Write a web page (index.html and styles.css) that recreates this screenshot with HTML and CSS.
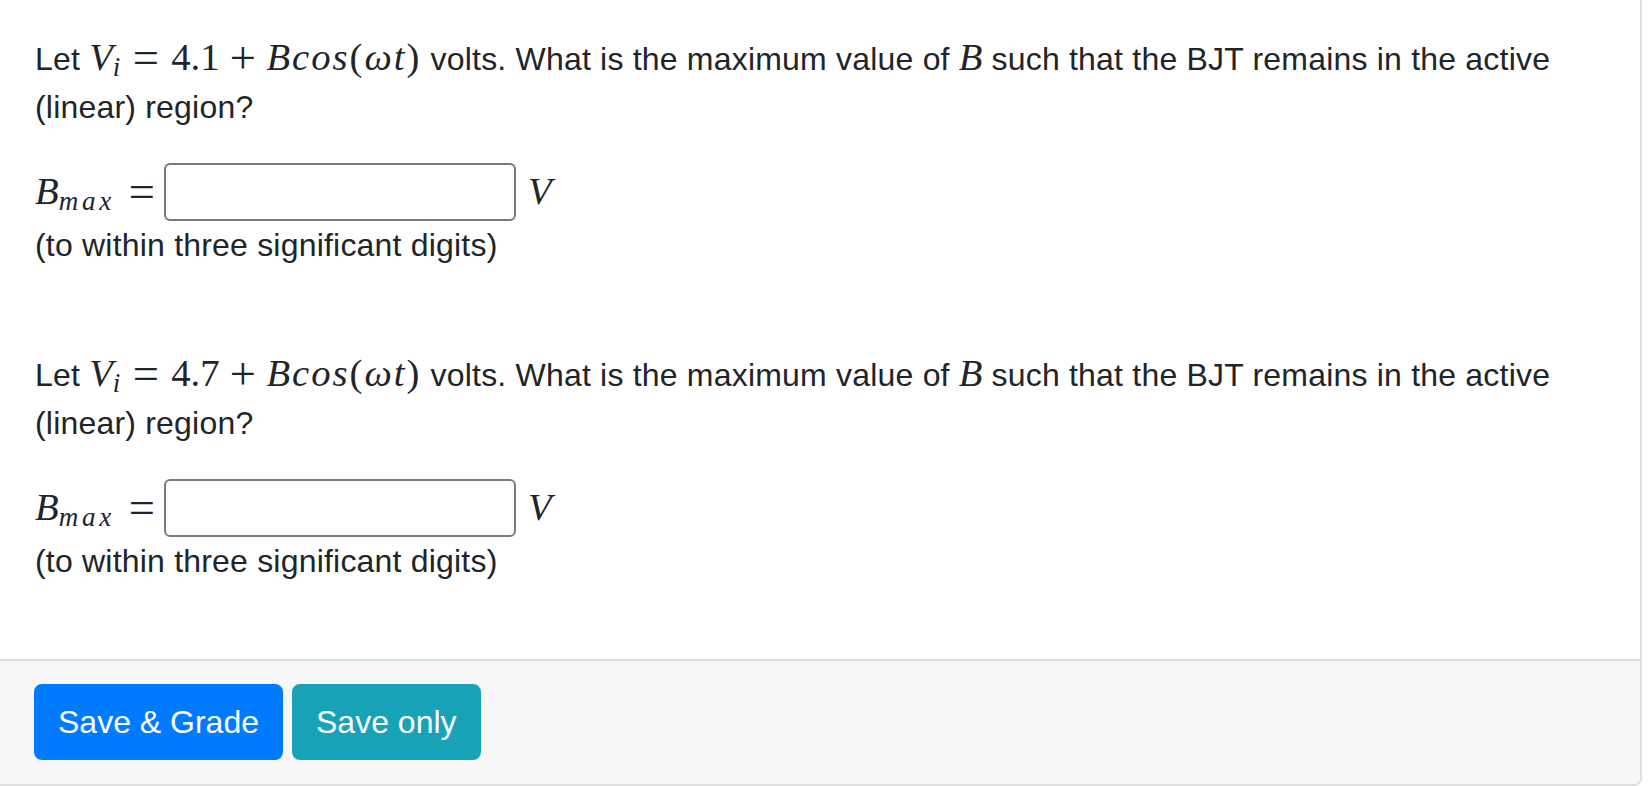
FILE: index.html
```html
<!DOCTYPE html>
<html lang="en">
<head>
<meta charset="utf-8">
<title>BJT active region</title>
<link rel="stylesheet" href="styles.css">
</head>
<body>
<div class="page">
  <div class="card">
    <div class="card-body">
      <div class="question">
        <p class="prompt">Let <span class="m"><i>V</i><sub class="sb"><i>i</i></sub><span class="rel">=</span>4.1<span class="bin">+</span><span class="fn"><i>B</i><i>c</i><i>o</i><i>s</i>(<i>ω</i><i>t</i>)</span></span> volts. What is the maximum value of <span class="m"><i>B</i></span> such that the BJT remains in the active (linear) region?</p>
        <div class="answer-row">
          <span class="m"><i>B</i><sub class="sb sb-wide"><i>max</i></sub><span class="rel">=</span></span>
          <input class="answer" type="text" aria-label="B max">
          <span class="m unit"><i>V</i></span>
        </div>
        <p class="note">(to within three significant digits)</p>
      </div>
      <div class="question">
        <p class="prompt">Let <span class="m"><i>V</i><sub class="sb"><i>i</i></sub><span class="rel">=</span>4.7<span class="bin">+</span><span class="fn"><i>B</i><i>c</i><i>o</i><i>s</i>(<i>ω</i><i>t</i>)</span></span> volts. What is the maximum value of <span class="m"><i>B</i></span> such that the BJT remains in the active (linear) region?</p>
        <div class="answer-row">
          <span class="m"><i>B</i><sub class="sb sb-wide"><i>max</i></sub><span class="rel">=</span></span>
          <input class="answer" type="text" aria-label="B max">
          <span class="m unit"><i>V</i></span>
        </div>
        <p class="note">(to within three significant digits)</p>
      </div>
    </div>
    <div class="card-footer">
      <button class="btn btn-primary" type="button">Save &amp; Grade</button>
      <button class="btn btn-info" type="button">Save only</button>
    </div>
  </div>
</div>
</body>
</html>
```

FILE: styles.css
```css
html, body {
  margin: 0;
  padding: 0;
  background: #ffffff;
  overflow: hidden;
}

body {
  font-family: "Liberation Sans", Arial, sans-serif;
  font-size: 32px;
  line-height: 48px;
  color: #212529;
  letter-spacing: 0.2px;
}

.page {
  padding-right: 8px;
}

.card {
  border-right: 2px solid #dfdfdf;
  border-bottom: 2px solid #dfdfdf;
  border-bottom-right-radius: 8px;
  background: #ffffff;
  overflow: hidden;
}

.card-body {
  padding: 35px 40px 74px 35px;
}

.question + .question {
  margin-top: 82px;
}

.prompt {
  margin: 0 0 32px 0;
}

.note {
  margin: 0;
}

.m {
  font-family: "Liberation Serif", "Times New Roman", serif;
  font-size: 38.7px;
  line-height: 1;
  letter-spacing: 0;
}

.m i {
  font-style: italic;
}

.fn {
  letter-spacing: 2px;
}

.sb {
  font-size: 0.7em;
  vertical-align: -6px;
  line-height: 0;
}

.sb-wide {
  letter-spacing: 0.14em;
}

.rel,
.bin {
  display: inline-block;
  transform: scale(1.2);
}

.rel {
  margin: 0 14.5px;
}

.bin {
  margin: 0 12.5px;
}

.answer-row {
  display: flex;
  align-items: center;
  height: 58px;
}

.answer-row .m {
  position: relative;
  top: -1px;
}

.answer-row .rel {
  margin-left: 16px;
  margin-right: 11px;
}

.answer {
  box-sizing: border-box;
  width: 352px;
  height: 58px;
  margin: 0;
  border: 2px solid #7b7b7b;
  border-radius: 6px;
  background: #ffffff;
  font-size: 32px;
  padding: 0 10px;
}

.unit {
  margin-left: 12px;
}

.card-footer {
  display: flex;
  gap: 9px;
  background: #f7f7f7;
  border-top: 2px solid #dcdcdc;
  padding: 23px 40px 24px 34px;
}

.btn {
  font-family: "Liberation Sans", Arial, sans-serif;
  font-size: 32px;
  line-height: 48px;
  letter-spacing: 0;
  padding: 12px 22px;
  border: 2px solid transparent;
  border-radius: 8px;
  color: #ffffff;
  cursor: pointer;
}

.btn-primary {
  background: #007bff;
  border-color: #007bff;
}

.btn-info {
  background: #17a2b8;
  border-color: #17a2b8;
}
```
